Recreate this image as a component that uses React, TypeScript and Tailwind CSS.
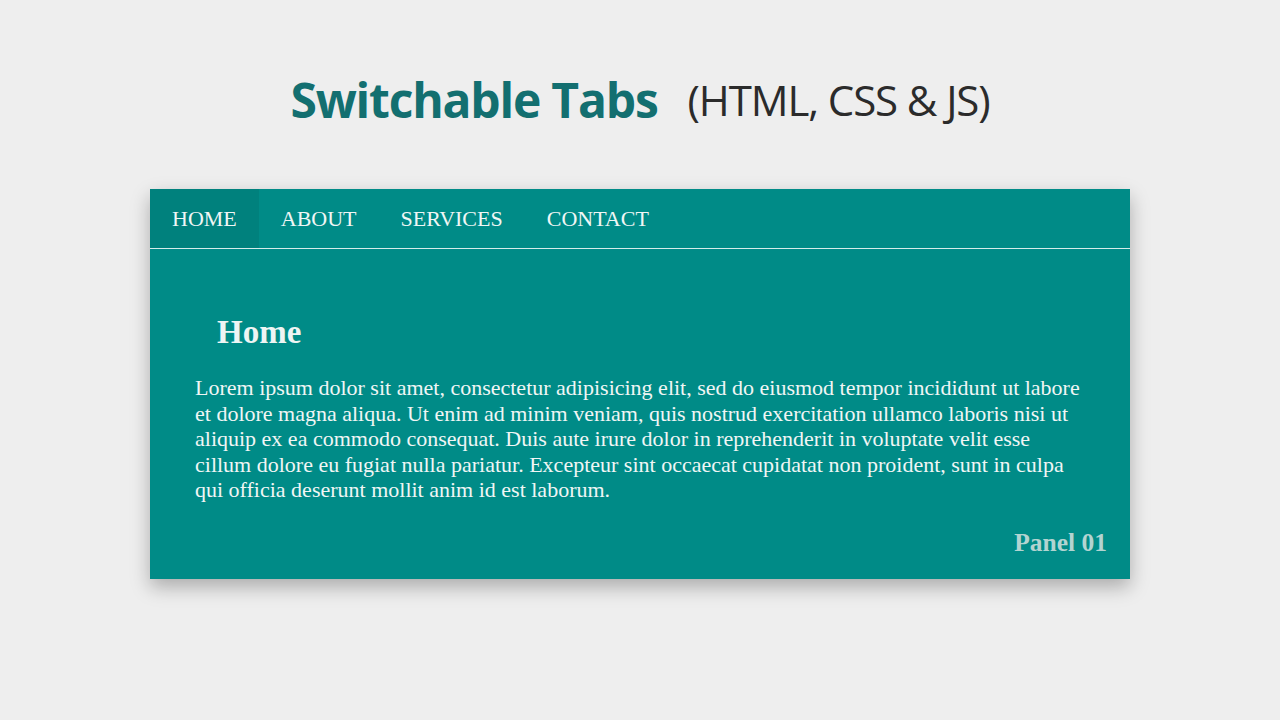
import React, { useState } from "react";

const tabs = [
  {
    label: "HOME",
    title: "Home",
    panel: "Panel 01",
  },
  { label: "ABOUT", title: "About", panel: "Panel 02" },
  { label: "SERVICES", title: "Services", panel: "Panel 03" },
  { label: "CONTACT", title: "Contact", panel: "Panel 04" },
];

const lorem =
  "Lorem ipsum dolor sit amet, consectetur adipisicing elit, sed do eiusmod tempor incididunt ut labore et dolore magna aliqua. Ut enim ad minim veniam, quis nostrud exercitation ullamco laboris nisi ut aliquip ex ea commodo consequat. Duis aute irure dolor in reprehenderit in voluptate velit esse cillum dolore eu fugiat nulla pariatur. Excepteur sint occaecat cupidatat non proident, sunt in culpa qui officia deserunt mollit anim id est laborum.";

export default function App() {
  const [active, setActive] = useState(0);
  const tab = tabs[active];
  return (
    <div className="min-h-screen w-full bg-[#eeeeee] flex flex-col items-center">
      <h1 className="mt-[70px] h-[60px] flex items-center gap-[30px] font-['Open_Sans',sans-serif] leading-none">
        <span className="text-[48px] font-bold text-[#136f70] tracking-[-1.2px]">Switchable Tabs</span>
        <span className="text-[42px] font-normal text-[#2b2b2b] tracking-[-1.1px]">(HTML, CSS &amp; JS)</span>
      </h1>
      <div className="mt-[59px] w-[980px] bg-[#008b87] shadow-[0_8px_18px_rgba(0,0,0,0.28)] font-['Liberation_Serif',serif]">
        <div className="flex h-[60px] border-b border-[#d5ecea]">
          {tabs.map((t, i) => (
            <button
              key={t.label}
              onClick={() => setActive(i)}
              className={
                "px-[22px] h-full text-[22px] text-[#f0f6f5] leading-none font-['Liberation_Serif',serif] " +
                (i === active ? "bg-[#00817d]" : "bg-transparent")
              }
            >
              {t.label}
            </button>
          ))}
        </div>
        <div className="px-[45px] pt-[63px] pb-[21px]">
          <h2 className="pl-[22px] text-[33px] leading-[40px] font-bold text-[#eef5f4]">{tab.title}</h2>
          <p className="mt-[23px] text-[22px] leading-[25.5px] text-[#f0f6f5]">{lorem}</p>
          <div className="mt-[25px] -mr-[22px] text-right text-[25.5px] leading-[30px] font-bold text-[#b3d4d1]">
            {tab.panel}
          </div>
        </div>
      </div>
    </div>
  );
}
